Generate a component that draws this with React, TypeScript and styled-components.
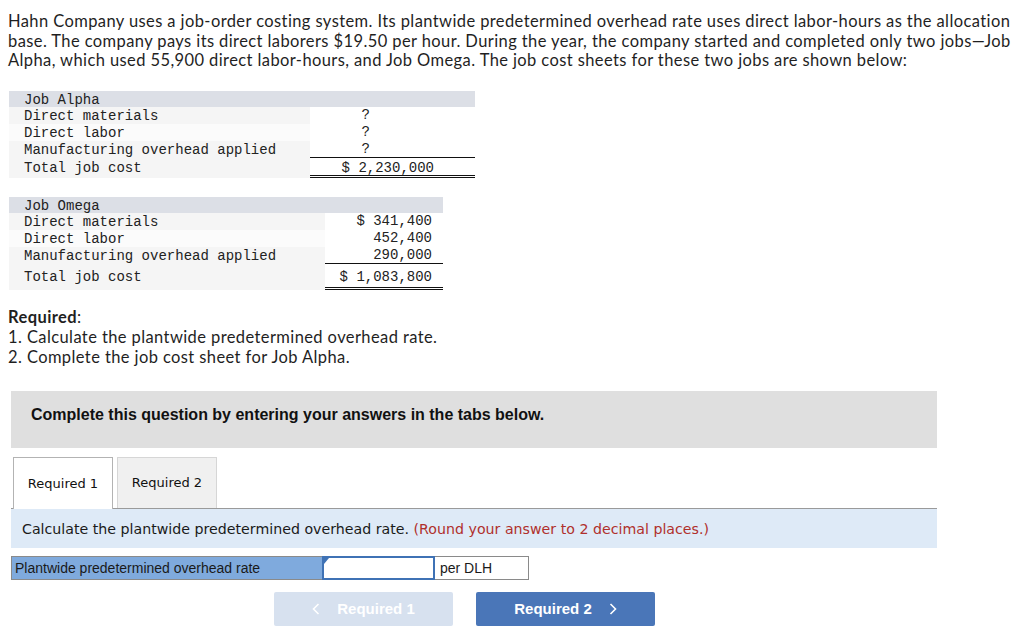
import React from "react";
import styled, { createGlobalStyle } from "styled-components";

const Global = createGlobalStyle`
  html, body { margin: 0; padding: 0; background: #fff; }
  body { width: 1024px; height: 644px; overflow: hidden; }
`;

const Page = styled.div`
  padding: 12px 0 0 8px;
  color: #222;
`;

const Prose = styled.p`
  margin: 0;
  font-family: Lato, "Open Sans", sans-serif;
  font-size: 16.5px;
  letter-spacing: 0.4px;
  line-height: 19.5px;
  white-space: nowrap;
  color: #1f1f1f;
`;

const Sheet = styled.div<{ $w: number; $label: number; $top: number }>`
  margin: ${(p) => p.$top}px 0 0 1px;
  width: ${(p) => p.$w}px;
  display: grid;
  grid-template-columns: ${(p) => p.$label}px 1fr;
  font-family: "Liberation Mono", "Courier New", monospace;
  font-size: 14px;
  color: #222;
`;

const Head = styled.div`
  grid-column: 1 / span 2;
  background: #dcdfe6;
  height: 16px;
  box-sizing: border-box;
  padding: 1px 0 0 15px;
  line-height: 16px;
`;

const Label = styled.div<{ $h?: number; $shade?: boolean }>`
  height: ${(p) => p.$h ?? 17}px;
  box-sizing: border-box;
  padding: 1px 0 0 15px;
  line-height: ${(p) => (p.$h ?? 17) - 1}px;
  background: ${(p) => (p.$shade ? "#f5f5f5" : "#fbfbfb")};
`;

const Value = styled.div<{
  $h?: number;
  $pad: number;
  $rule?: "single" | "double";
}>`
  height: ${(p) => p.$h ?? 17}px;
  box-sizing: border-box;
  padding: 1px ${(p) => p.$pad}px 0 0;
  line-height: ${(p) => (p.$h ?? 17) - 2}px;
  text-align: right;
  background: #fff;
  border-bottom: ${(p) =>
    p.$rule === "single"
      ? "1px solid #111"
      : p.$rule === "double"
      ? "3px double #111"
      : "none"};
`;

const Required = styled(Prose)`
  margin-top: 17px;
  line-height: 20px;
  b { font-weight: 700; }
`;

const Notice = styled.div`
  margin: 24px 0 0 3px;
  width: 926px;
  height: 57px;
  box-sizing: border-box;
  padding: 14px 0 0 20px;
  background: #dfdfdf;
  font-family: "Liberation Sans", Arial, sans-serif;
  font-weight: 700;
  font-size: 16px;
  line-height: 20px;
  color: #111;
`;

const Tabs = styled.div`
  display: flex;
  gap: 4px;
  margin: 9px 0 0 5px;
  height: 51px;
`;

const Tab = styled.div<{ $active?: boolean }>`
  width: 100px;
  box-sizing: border-box;
  height: ${(p) => (p.$active ? 52 : 51)}px;
  border: 1px solid ${(p) => (p.$active ? "#b3b3b3" : "#d6d6d6")};
  border-bottom: none;
  background: ${(p) => (p.$active ? "#fff" : "#f0f0f0")};
  display: flex;
  align-items: center;
  justify-content: center;
  font-family: "DejaVu Sans", Verdana, sans-serif;
  font-size: 13px;
  color: #111;
  position: relative;
  z-index: 1;
`;

const Panel = styled.div`
  margin: 0 0 0 3px;
  width: 926px;
`;

const Instruction = styled.div`
  border-top: 1px solid #9a9a9a;
  background: #deeaf7;
  height: 40px;
  box-sizing: border-box;
  padding: 11px 0 0 11px;
  font-family: "DejaVu Sans", Verdana, sans-serif;
  font-size: 14.2px;
  line-height: 18px;
  color: #1a1a1a;
  white-space: nowrap;
  span { color: #b0302c; }
`;

const AnswerRow = styled.div`
  display: flex;
  margin-top: 8px;
  height: 24px;
  font-family: "Liberation Sans", Arial, sans-serif;
  font-size: 14px;
`;

const AnswerLabel = styled.div`
  width: 311px;
  box-sizing: border-box;
  border: 1px solid #8a8a8a;
  border-right: none;
  background: #7faadd;
  padding-left: 3px;
  line-height: 22px;
  color: #1a1a1a;
`;

const AnswerInput = styled.div`
  width: 113px;
  box-sizing: border-box;
  border: 2px solid #3f72b5;
  background: #fff;
  position: relative;
`;

const Flag = styled.span`
  position: absolute;
  left: 0;
  top: 0;
  width: 0;
  height: 0;
  border-top: 6px solid #3f72b5;
  border-right: 5px solid transparent;
`;

const Unit = styled.div`
  width: 94px;
  box-sizing: border-box;
  border: 1px solid #8a8a8a;
  border-left: none;
  padding-left: 5px;
  line-height: 22px;
  color: #1a1a1a;
`;

const Nav = styled.div`
  display: flex;
  gap: 23px;
  margin: 12px 0 0 266px;
`;

const NavButton = styled.div<{ $disabled?: boolean }>`
  width: 179px;
  height: 34px;
  border-radius: 2px;
  background: ${(p) => (p.$disabled ? "#d7e1ef" : "#4a76b8")};
  color: #fff;
  display: flex;
  align-items: center;
  justify-content: center;
  gap: 17px;
  font-family: "Liberation Sans", Arial, sans-serif;
  font-weight: 700;
  font-size: 15px;
`;

const Chevron = ({ dir }: { dir: "left" | "right" }) => (
  <svg width="8" height="12" viewBox="0 0 8 12" fill="none">
    <path
      d={dir === "left" ? "M6.5 1 L1.5 6 L6.5 11" : "M1.5 1 L6.5 6 L1.5 11"}
      stroke="#fff"
      strokeWidth="1.6"
    />
  </svg>
);

type Row = { label: string; value: string; pad?: number };

const JobSheet = ({
  title,
  rows,
  total,
  w,
  label,
  pad,
  top,
  totalH,
}: {
  title: string;
  rows: Row[];
  total: string;
  w: number;
  label: number;
  pad: number;
  top: number;
  totalH: number;
}) => (
  <Sheet $w={w} $label={label} $top={top}>
    <Head>{title}</Head>
    {rows.map((r, i) => (
      <React.Fragment key={r.label}>
        <Label $shade={i % 2 === 0}>{r.label}</Label>
        <Value $pad={r.pad ?? pad} $rule={i === rows.length - 1 ? "single" : undefined}>
          {r.value}
        </Value>
      </React.Fragment>
    ))}
    <Label $h={totalH} $shade>
      Total job cost
    </Label>
    <Value $h={totalH} $pad={pad} $rule="double">
      {total}
    </Value>
  </Sheet>
);

export default function App() {
  return (
    <>
      <Global />
      <Page>
        <Prose>
          Hahn Company uses a job-order costing system. Its plantwide predetermined overhead rate uses direct labor-hours as the allocation
          <br />
          base. The company pays its direct laborers $19.50 per hour. During the year, the company started and completed only two jobs—Job
          <br />
          Alpha, which used 55,900 direct labor-hours, and Job Omega. The job cost sheets for these two jobs are shown below:
        </Prose>

        <JobSheet
          title="Job Alpha"
          rows={[
            { label: "Direct materials", value: "?", pad: 105 },
            { label: "Direct labor", value: "?", pad: 105 },
            { label: "Manufacturing overhead applied", value: "?", pad: 105 },
          ]}
          total="$ 2,230,000"
          w={466}
          label={301}
          pad={41}
          top={20}
          totalH={20}
        />

        <JobSheet
          title="Job Omega"
          rows={[
            { label: "Direct materials", value: "$ 341,400" },
            { label: "Direct labor", value: "452,400" },
            { label: "Manufacturing overhead applied", value: "290,000" },
          ]}
          total="$ 1,083,800"
          w={434}
          label={316}
          pad={11}
          top={19}
          totalH={26}
        />

        <Required>
          <b>Required</b>:
          <br />
          1. Calculate the plantwide predetermined overhead rate.
          <br />
          2. Complete the job cost sheet for Job Alpha.
        </Required>

        <Notice>Complete this question by entering your answers in the tabs below.</Notice>

        <Tabs>
          <Tab $active>Required 1</Tab>
          <Tab>Required 2</Tab>
        </Tabs>

        <Panel>
          <Instruction>
            Calculate the plantwide predetermined overhead rate.{" "}
            <span>(Round your answer to 2 decimal places.)</span>
          </Instruction>
          <AnswerRow>
            <AnswerLabel>Plantwide predetermined overhead rate</AnswerLabel>
            <AnswerInput>
              <Flag />
            </AnswerInput>
            <Unit>per DLH</Unit>
          </AnswerRow>
        </Panel>

        <Nav>
          <NavButton $disabled>
            <Chevron dir="left" />
            Required 1
          </NavButton>
          <NavButton>
            Required 2
            <Chevron dir="right" />
          </NavButton>
        </Nav>
      </Page>
    </>
  );
}
